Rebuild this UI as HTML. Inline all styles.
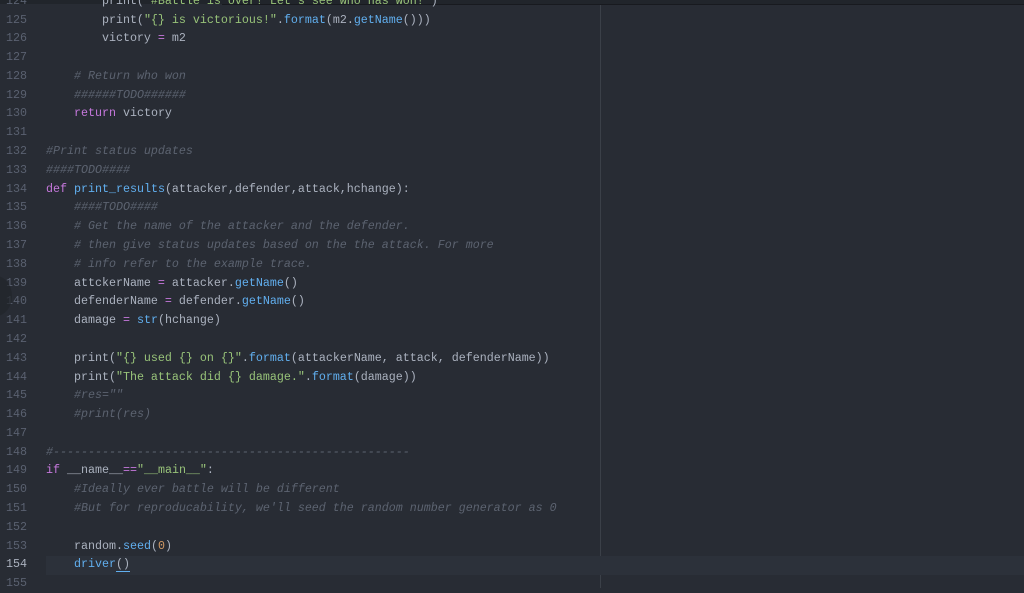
<!DOCTYPE html>
<html><head><meta charset="utf-8"><style>
html,body{margin:0;padding:0;width:1024px;height:588px;overflow:hidden;background:#282c34;}
.top{position:absolute;left:0;top:0;width:1024px;height:4px;background:#21252b;}
.topb{position:absolute;left:222px;top:4px;width:802px;height:1px;background:#181a1f;}
.guide{position:absolute;left:600px;top:5px;width:1px;height:583px;background:#3b4048;}
.cur{position:absolute;left:46px;width:978px;height:19px;background:#2c313a;}
.ln{position:absolute;left:0;width:27px;text-align:right;font:11.67px "Liberation Mono",monospace;color:#5a6170;line-height:19px;}
.ln.a{color:#abb2bf;}
.c{position:absolute;left:46px;white-space:pre;font:11.67px "Liberation Mono",monospace;color:#abb2bf;line-height:19px;}
.k{color:#c678dd}.s{color:#98c379}.f{color:#61afef}.m{color:#5c6370;font-style:italic}.n{color:#d19a66}.o{color:#c678dd}
.u{border-bottom:1px solid #61afef}
.bump{position:absolute;left:-20px;top:276px;width:32px;height:40px;border-radius:50%;background:#21252b;opacity:.7}
</style></head><body>
<div class="top"></div><div class="topb"></div><div class="guide"></div>
<div class="cur" style="top:556px"></div>
<div id="g"></div>
<div class="bump"></div>
<script>
var L=[
[124,'        print(<span class="s">"#Battle is over! Let\'s see who has won!"</span>)'],
[125,'        print(<span class="s">"{} is victorious!"</span>.<span class="f">format</span>(m2.<span class="f">getName</span>()))'],
[126,'        victory <span class="o">=</span> m2'],
[127,''],
[128,'    <span class="m"># Return who won</span>'],
[129,'    <span class="m">######TODO######</span>'],
[130,'    <span class="k">return</span> victory'],
[131,''],
[132,'<span class="m">#Print status updates</span>'],
[133,'<span class="m">####TODO####</span>'],
[134,'<span class="k">def</span> <span class="f">print_results</span>(attacker,defender,attack,hchange):'],
[135,'    <span class="m">####TODO####</span>'],
[136,'    <span class="m"># Get the name of the attacker and the defender.</span>'],
[137,'    <span class="m"># then give status updates based on the the attack. For more</span>'],
[138,'    <span class="m"># info refer to the example trace.</span>'],
[139,'    attckerName <span class="o">=</span> attacker.<span class="f">getName</span>()'],
[140,'    defenderName <span class="o">=</span> defender.<span class="f">getName</span>()'],
[141,'    damage <span class="o">=</span> <span class="f">str</span>(hchange)'],
[142,''],
[143,'    print(<span class="s">"{} used {} on {}"</span>.<span class="f">format</span>(attackerName, attack, defenderName))'],
[144,'    print(<span class="s">"The attack did {} damage."</span>.<span class="f">format</span>(damage))'],
[145,'    <span class="m">#res=""</span>'],
[146,'    <span class="m">#print(res)</span>'],
[147,''],
[148,'<span class="m">#---------------------------------------------------</span>'],
[149,'<span class="k">if</span> __name__<span class="o">==</span><span class="s">"__main__"</span>:'],
[150,'    <span class="m">#Ideally ever battle will be different</span>'],
[151,'    <span class="m">#But for reproducability, we\'ll seed the random number generator as 0</span>'],
[152,''],
[153,'    random.<span class="f">seed</span>(<span class="n">0</span>)'],
[154,'    <span class="f">driver</span><span class="u">()</span>'],
[155,'']];
var h='';
L.forEach(function(x){var t=Math.round(20+(x[0]-125)*18.79-9.5);
h+='<div class="ln'+(x[0]==154?' a':'')+'" style="top:'+t+'px">'+x[0]+'</div><div class="c" style="top:'+t+'px">'+x[1]+'</div>';});
document.getElementById('g').innerHTML=h;
</script>
</body></html>
